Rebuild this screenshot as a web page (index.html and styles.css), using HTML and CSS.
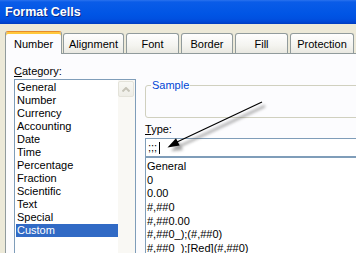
FILE: index.html
```html
<!DOCTYPE html>
<html>
<head>
<meta charset="utf-8">
<link rel="stylesheet" href="styles.css">
</head>
<body>
<div class="window">
  <div class="titlebar"><span class="title">Format Cells</span></div>
  <div class="client">
    <div class="tabs">
      <div class="tab active w-number">Number</div>
      <div class="tab w-align">Alignment</div>
      <div class="tab w-font">Font</div>
      <div class="tab w-border">Border</div>
      <div class="tab w-fill">Fill</div>
      <div class="tab w-prot">Protection</div>
    </div>
    <div class="panel">
      <div class="col-left">
        <div class="label"><u>C</u>ategory:</div>
        <div class="listbox">
          <ul class="items">
            <li>General</li>
            <li>Number</li>
            <li>Currency</li>
            <li>Accounting</li>
            <li>Date</li>
            <li>Time</li>
            <li>Percentage</li>
            <li>Fraction</li>
            <li>Scientific</li>
            <li>Text</li>
            <li>Special</li>
            <li class="selected">Custom</li>
          </ul>
          <div class="scrollbar">
            <div class="sb-btn">
              <svg width="8" height="5" viewBox="0 0 8 5"><path d="M0.5 4.5 L4 1 L7.5 4.5" fill="none" stroke="#c6c4b8" stroke-width="2"/></svg>
            </div>
          </div>
        </div>
      </div>
      <div class="col-right">
        <div class="sample"><span class="sample-legend">Sample</span></div>
        <div class="label type-label"><u>T</u>ype:</div>
        <div class="input"><span>;;;</span><span class="caret"></span></div>
        <ul class="typelist">
          <li>General</li>
          <li>0</li>
          <li>0.00</li>
          <li>#,##0</li>
          <li>#,##0.00</li>
          <li>#,##0_);(#,##0)</li>
          <li>#,##0_);[Red](#,##0)</li>
        </ul>
      </div>
    </div>
  </div>
  <svg class="arrow" width="356" height="253" viewBox="0 0 356 253">
    <defs>
      <filter id="blur" x="-20%" y="-20%" width="140%" height="140%"><feGaussianBlur stdDeviation="1.6"/></filter>
    </defs>
    <g filter="url(#blur)" opacity="0.55" transform="translate(3 4)">
      <path d="M262 102 L177 142" stroke="#555" stroke-width="2"/>
      <path d="M168 147 L176 138 L180 146 Z" fill="#555"/>
    </g>
    <path d="M262 102 L177 142" stroke="#000" stroke-width="1.2"/>
    <path d="M167.5 147.5 L176 138.2 L179.7 145.6 Z" fill="#000"/>
  </svg>
</div>
</body>
</html>
```

FILE: styles.css
```css
html, body {
  margin: 0;
  padding: 0;
}
body {
  width: 356px;
  height: 253px;
  overflow: hidden;
  background: #ece9d8;
  font-family: "Liberation Sans", Arial, sans-serif;
  font-size: 11px;
  color: #000;
}
.window {
  position: relative;
  width: 356px;
  height: 253px;
  overflow: hidden;
}
.titlebar {
  height: 24px;
  padding-left: 5px;
  background: linear-gradient(#2a72ee 0, #0a5ce8 2px, #0055e5 14px, #0050e0 19px, #0046d4 22px, #003bbd 24px);
  display: flex;
  align-items: center;
}
.title {
  font-weight: bold;
  font-size: 12.5px;
  line-height: 24px;
  color: #fff;
  text-shadow: 1px 1px 0 #0a2a8a;
}
.client {
  background: #ece9d8;
}
.tabs {
  height: 29px;
  padding-left: 5px;
  display: flex;
  align-items: flex-end;
  gap: 2px;
}
.tab {
  box-sizing: border-box;
  height: 20px;
  border: 1px solid #919b9c;
  border-bottom: none;
  border-radius: 3px 3px 0 0;
  background: linear-gradient(#fefefe, #f4f4f0 60%, #e9e8e1);
  padding-top: 4px;
  line-height: 13px;
  text-align: center;
}
.tab.active {
  height: 23px;
  margin-bottom: -1px;
  margin-right: -1px;
  position: relative;
  z-index: 1;
  background: #fcfcfe;
  border-top: 1px solid #e68b2c;
  box-shadow: inset 0 2px 0 #ffc83c;
  padding-top: 6px;
}
.w-number { width: 57px; }
.w-align { width: 61px; }
.w-font { width: 53px; }
.w-border { width: 52px; }
.w-fill { width: 53px; }
.w-prot { width: 64px; }

.panel {
  margin-left: 5px;
  width: 380px;
  height: 240px;
  border-top: 1px solid #919b9c;
  border-left: 1px solid #919b9c;
  background: #fcfcfe;
  padding: 11px 0 0 8px;
  display: flex;
  gap: 9px;
  box-sizing: border-box;
}
.label {
  line-height: 13px;
  margin-bottom: 1px;
}
.col-left {
  width: 122px;
  flex: none;
}
.listbox {
  box-sizing: border-box;
  width: 122px;
  height: 200px;
  border: 1px solid #7f9db9;
  background: #fff;
  display: flex;
}
.items {
  list-style: none;
  margin: 0;
  padding: 1px 0 0 1px;
  flex: 1;
}
.items li {
  line-height: 13px;
  height: 13px;
  padding-left: 1px;
  white-space: nowrap;
}
.items li.selected {
  background: #316ac5;
  color: #fff;
}
.scrollbar {
  width: 17px;
  flex: none;
  background: #f9f8f4;
  padding: 1px 1px 0 0;
  box-sizing: border-box;
}
.sb-btn {
  box-sizing: border-box;
  width: 16px;
  height: 16px;
  border: 1px solid #e4e3da;
  border-radius: 2px;
  background: linear-gradient(#f8f8f4, #eeede6);
  display: flex;
  align-items: center;
  justify-content: center;
}
.col-right {
  width: 240px;
  flex: none;
}
.sample {
  box-sizing: border-box;
  margin-top: 20px;
  height: 33px;
  border: 1px solid #d0d0bf;
  border-radius: 3px;
}
.sample-legend {
  display: inline-block;
  margin: -7px 0 0 5px;
  padding: 0 1px;
  line-height: 13px;
  color: #0046d5;
  background: #fcfcfe;
  vertical-align: top;
}
.type-label {
  margin-top: 5px;
  margin-bottom: 2px;
}
.input {
  box-sizing: border-box;
  height: 19px;
  border: 1px solid #7f9db9;
  background: #fff;
  padding: 0 2px;
  line-height: 17px;
  display: flex;
  align-items: center;
}
.caret {
  display: inline-block;
  width: 1px;
  height: 12px;
  background: #000;
  margin-left: 2px;
}
.typelist {
  list-style: none;
  margin: 0;
  padding: 2px 0 0 1px;
  height: 120px;
  border: 1px solid #7f9db9;
  background: #fff;
}
.typelist li {
  line-height: 13.67px;
  height: 13.67px;
  white-space: nowrap;
}
.arrow {
  position: absolute;
  left: 0;
  top: 0;
  pointer-events: none;
}
```
